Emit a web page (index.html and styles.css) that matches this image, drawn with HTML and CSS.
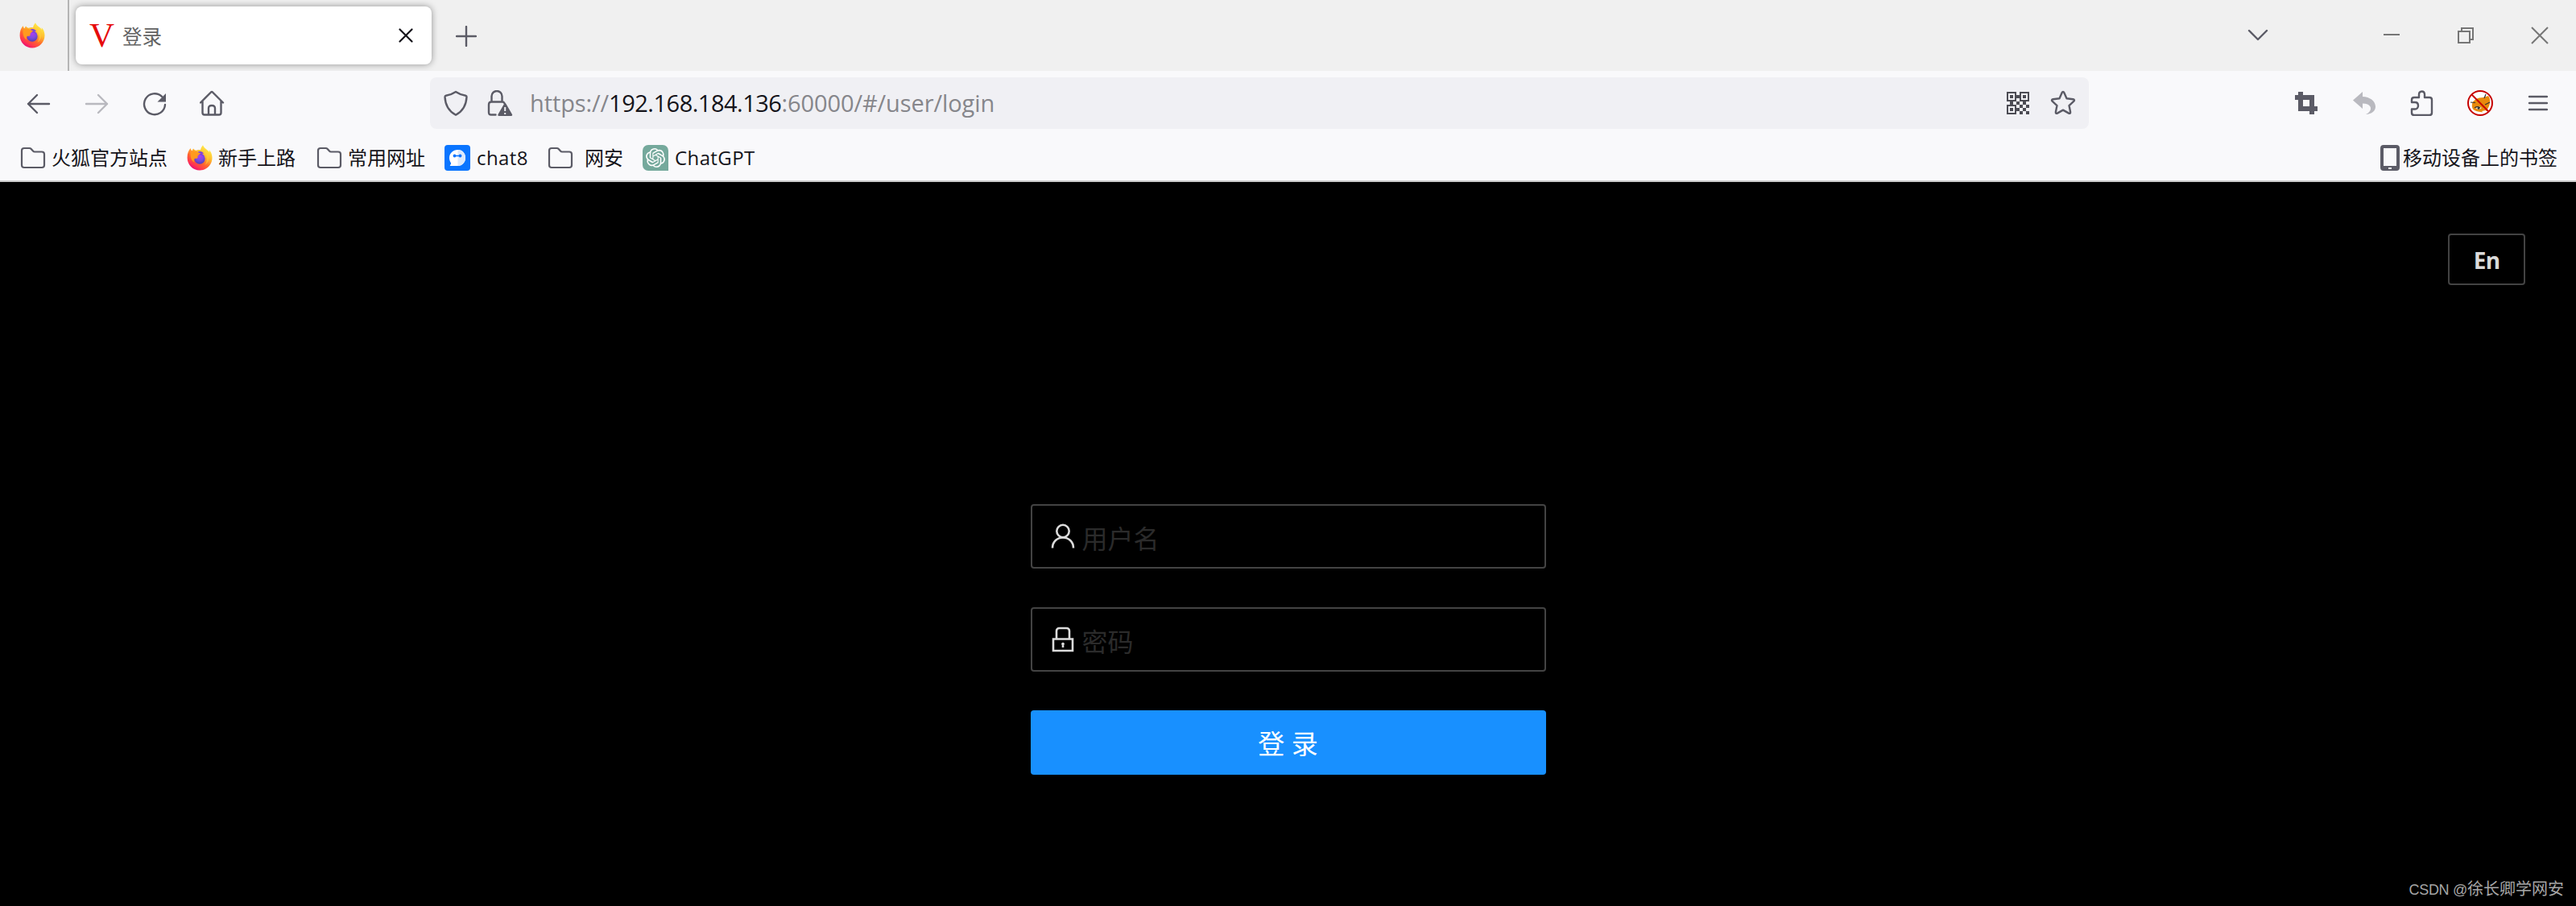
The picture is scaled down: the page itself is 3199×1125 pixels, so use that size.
FILE: index.html
```html
<!DOCTYPE html>
<html lang="zh-CN">
<head>
    <meta charset="UTF-8">
    <meta name="viewport" content="width=device-width, initial-scale=1.0">
    <title>登录</title>
    <link rel="stylesheet" href="styles.css">
</head>
<body>
    <!-- Shared icons -->
    <svg class="defs" width="0" height="0">
        <defs>
            <linearGradient id="flame" x1="0.85" y1="0.05" x2="0.25" y2="1">
                <stop offset="0" stop-color="#fff44f"/>
                <stop offset="0.35" stop-color="#ffbd2f"/>
                <stop offset="0.6" stop-color="#ff6a2c"/>
                <stop offset="0.82" stop-color="#ff3750"/>
                <stop offset="1" stop-color="#e6007f"/>
            </linearGradient>
            <radialGradient id="globe" cx="0.5" cy="0.25" r="0.8">
                <stop offset="0" stop-color="#b13bf0"/>
                <stop offset="0.5" stop-color="#7d4be0"/>
                <stop offset="1" stop-color="#4a3cb0"/>
            </radialGradient>
            <symbol id="firefox" viewBox="0 0 32 32">
                <path fill="url(#flame)" d="M20 .3c-1.600 1.800-2.700 4-2.900 6-2-.5-4-.3-5.500.5-1.500-.2-2.600-.8-3.400-2.200C7.300 5.500 6.800 6.400 6.600 7.300 5.500 6.500 4.900 5.600 4.700 4 2 7 .5 11 .6 16c0 8.700 7 15.500 15.400 15.500S31.500 24.700 31.500 16c0-4.500-2-8.500-4-9.700.4 1 .6 1.900.6 2.800C26 5.500 21.600 4.800 20 .3z"/>
                <circle cx="16" cy="17" r="6.700" fill="url(#globe)"/>
                <path fill="#ff9a1f" d="M4.800 9.200c3-1.800 6.400-1.700 8.200-.4 1.300.9 3 1 4.600 1.200-.5 1.700-3.400 2.400-4 3.600-.5 1 .6 2.200-.6 2.900-1.300.7-3-.4-3.900 1.200-.8 1.500 0 3.200 1 4.300C5.500 20 3.800 14 4.800 9.200z"/>
                <path fill="#7a3fe0" d="M13.500 8.800c2.600-1.600 6.500-.6 7.600 2.300-1.200-.5-2.200-.4-2.800 0 1.800.7 3 2.400 3.200 4-2-2.700-4-3.300-6.700-2.800.8-1 2.400-1.400 2.800-2.300-1.500 0-3-.3-4.100-1.200z"/>
                <path fill="#ffd23c" opacity=".55" d="M21 5c4 3 7 7 6.300 12.500-.5 3.600-2.500 6-5 7.500 3-4 3.400-9 1-13-1.300-2-2.700-4-2.300-7z"/>
            </symbol>
            <symbol id="folder" viewBox="0 0 32 28">
                <path fill="none" stroke="#5b5b66" stroke-width="2.200" stroke-linejoin="round" d="M5 2h6.500c1 0 1.600.3 2.200 1l2.300 2.600c.6.700 1.200.9 2 .9h9c2 0 3 1 3 3V23c0 2-1 3-3 3H5c-2 0-3-1-3-3V5c0-2 1-3 3-3z"/>
            </symbol>
        </defs>
    </svg>

    <!-- Tab strip -->
    <div class="tabs">
        <div class="pinned"><svg width="32" height="32"><use href="#firefox"/></svg></div>
        <div class="tab">
            <span class="favicon">V</span>
            <span class="tab-title">登录</span>
            <svg class="tab-close" width="18" height="18" viewBox="0 0 18 18"><path d="M1.500 1.500l15 15M16.500 1.500l-15 15"/></svg>
        </div>
        <svg class="icon new-tab" width="26" height="26" viewBox="0 0 26 26"><path d="M13 1v24M1 13h24"/></svg>
        <div class="window">
            <svg class="icon" width="26" height="16" viewBox="0 0 26 16"><path d="M2 2l11 11L24 2"/></svg>
            <svg class="sys min" width="20" height="20" viewBox="0 0 20 20"><path d="M0 9h20"/></svg>
            <svg class="sys" width="20" height="20" viewBox="0 0 20 20"><path d="M1 5h14v14H1zM5 5V1h14v14h-4"/></svg>
            <svg class="sys" width="22" height="22" viewBox="0 0 22 22"><path d="M1 1l20 20M21 1L1 21"/></svg>
        </div>
    </div>

    <!-- Navigation bar -->
    <div class="nav">
        <div class="nav-buttons">
            <svg class="icon" width="32" height="32" viewBox="0 0 32 32"><path d="M29 17H3M14 6L3 17l11 11"/></svg>
            <svg class="icon disabled" width="32" height="32" viewBox="0 0 32 32"><path d="M3 17h26M18 6l11 11-11 11"/></svg>
            <svg class="icon" width="32" height="32" viewBox="0 0 32 32"><path d="M29 18a13 13 0 1 1-4-10.200"/><path class="solid" d="M30 4v10.500H19.500z"/></svg>
            <svg class="icon" width="32" height="32" viewBox="1 0 32 32"><path d="M2 15.500L15 2.500c.7-.6 1.300-.6 2 0l13 13M4.500 13.500V28c0 1.700.8 2.500 2.500 2.500h18c1.700 0 2.500-.8 2.500-2.500V13.500M12 30V22.500c0-2 1.200-3.500 4-3.500s4 1.500 4 3.500V30"/></svg>
        </div>
        <div class="urlbar">
            <svg class="icon" width="32" height="32" viewBox="0 0 32 32"><path d="M16 2c4 2.700 8 4.200 12.200 4.700 1 .2 1.400.8 1.300 1.800C29 18.500 25 26 16 30.700 7 26 3 18.500 2.500 8.500c0-1 .4-1.600 1.300-1.800C8 6.200 12 4.700 16 2z"/></svg>
            <svg class="icon" width="32" height="32" viewBox="0 0 32 32"><path d="M5.500 14V7.500a6.500 6.500 0 0 1 13 0V14M10.500 30.500H5c-2 0-3-1-3-3V18c0-2 1-3.500 3-3.500h14c1.300 0 2 .8 2.500 1.800"/><path class="solid" d="M21 17c.7-1.300 1.800-1.300 2.500 0l7.500 13c.5 1.200 0 2-1.200 2H14.700c-1.200 0-1.800-.8-1.200-2z"/><path class="mark" d="M22.200 21v5M22.200 28v2"/></svg>
            <div class="url"><span class="scheme">https://</span><span class="host">192.168.184.136</span><span class="path">:60000/#/user/login</span></div>
            <svg class="qr" width="28" height="28" viewBox="0 0 28 28">
                <path fill-rule="evenodd" d="M0 0h12v12H0zM2 2v8h8V2zM16 0h12v12H16zM18 2v8h8V2zM0 16h12v12H0zM2 18v8h8v-8z"/>
                <path d="M4 4h4v4H4zM20 4h4v4h-4zM4 20h4v4H4zM12 4h4v4h-4zM4 12h4v4H4zM12 12h4v4h-4zM20 12h4v4h-4zM16 16h4v4h-4zM24 16h4v4h-4zM12 20h4v4h-4zM20 20h4v4h-4zM16 24h4v4h-4zM24 24h4v4h-4z"/>
            </svg>
            <svg class="icon" width="32" height="32" viewBox="0 0 32 32"><path d="M14.700 3c.6-1.300 2-1.300 2.600 0l3.200 7.300 8 .9c1.500.2 2 1.500.9 2.500l-5.900 5.400 1.600 8c.3 1.500-.8 2.200-2 1.500L16 24.600l-7.100 4c-1.200.7-2.300 0-2-1.500l1.600-8-5.900-5.400c-1.100-1-.6-2.300.9-2.500l8-.9z"/></svg>
        </div>
        <div class="extensions">
            <svg class="fill" width="28" height="28" viewBox="0 0 28 28"><path fill-rule="evenodd" d="M4 0h6v4h14v14h4v6h-4v4h-6v-4H4V10H0V4h4zM10 10v8h8v-8z"/></svg>
            <svg class="fill disabled undo" width="28" height="28" viewBox="0 0 28 28"><path d="M12 0v6c9 .5 15.500 5 16 12 .2 5-4 9.500-12 10 5.500-2.500 7-6.500 5.500-9.500C20 15.700 17 14.500 12 14.500V21L0 10.500z"/></svg>
            <svg class="icon" width="32" height="32" viewBox="-2 0 32 32"><path d="M3 14.500V12c0-2 1-3 3-3h6V5.500C12 3 13 1.500 15.500 1.500S19 3 19 5.500V9h6c2 0 3 1 3 3v16c0 2-1 3-3 3H6c-2 0-3-1-3-3v-4.500h4c2.500 0 4-1.800 4-4.300s-1.500-4.200-4-4.200H3z"/></svg>
            <svg width="32" height="32" viewBox="0 0 32 32">
                <circle cx="16" cy="16" r="15" fill="#fff"/>
                <path fill="#e88a0c" d="M6 17c1-4 5-6.500 9-7.500l5-.5 6-2c2 2 2.500 5 2 8.500-.5 4-2 6.500-3 8 0 2-1 3.500-3 4-5-.5-10-.5-14-3-2-2-2.500-4.500-2-7.500z"/>
                <path fill="#fff" d="M10 22l5-1.500 3 1.500-4 2zM18 26l5-1 2 3-4 1z"/>
                <path fill="none" stroke="#333" stroke-width="1.200" d="M4 15l6 .5M23 5l-2 5M9 22c2-1.500 5-1.500 7 0M22 18l6-3"/>
                <circle cx="14" cy="22.500" r="1.400" fill="#333"/>
                <circle cx="16" cy="16" r="15" fill="none" stroke="#c60000" stroke-width="2"/>
                <path stroke="#c60000" stroke-width="2" d="M5.500 5.500l21 21"/>
            </svg>
            <svg class="icon" width="26" height="22" viewBox="-1 0 26 22"><path d="M2 3h22M2 11h22M2 19h22"/></svg>
        </div>
    </div>

    <!-- Bookmarks -->
    <div class="bookmarks">
        <div class="bookmark b1"><svg width="32" height="28"><use href="#folder"/></svg>火狐官方站点</div>
        <div class="bookmark b2"><svg width="32" height="32"><use href="#firefox"/></svg>新手上路</div>
        <div class="bookmark b3"><svg width="32" height="28"><use href="#folder"/></svg>常用网址</div>
        <div class="bookmark b4">
            <svg width="32" height="32" viewBox="0 0 32 32"><rect width="32" height="32" rx="4" fill="#0a75ff"/><path fill="#fff" d="M16.500 6C22.500 6 26 10.500 26 16s-4 10-9.500 10H7.500c-.8 0-.9-.8-.4-1.200 1-.8 1.200-1.500.7-2.800C6.500 20 6 18 6 16 6 10.500 10.500 6 16.500 6z"/><path fill="#dce9fb" d="M16.500 6C22.500 6 26 10.500 26 16s-4 10-9.500 10z"/><path fill="none" stroke="#0a75ff" stroke-width="1.500" d="M12 13.500h8"/><circle cx="12.500" cy="13.500" r="1.900" fill="#0a75ff"/><circle cx="19.500" cy="13.500" r="1.900" fill="#0a75ff"/></svg>chat8</div>
        <div class="bookmark b5"><svg width="32" height="28"><use href="#folder"/></svg>网安</div>
        <div class="bookmark b6">
            <svg width="32" height="32" viewBox="0 0 32 32"><path fill="#75a99c" d="M7 0h18a7 7 0 0 1 7 7v25H7a7 7 0 0 1-7-7V7a7 7 0 0 1 7-7z"/>
                <g transform="translate(4 4)" fill="#fff"><path d="M22.280 9.820a5.980 5.980 0 0 0-.52-4.910 6.050 6.050 0 0 0-6.510-2.900A6.070 6.070 0 0 0 4.980 4.180a5.980 5.980 0 0 0-4 2.900 6.050 6.050 0 0 0 .74 7.100 5.980 5.980 0 0 0 .51 4.910 6.050 6.050 0 0 0 6.520 2.900A5.980 5.980 0 0 0 13.260 24a6.060 6.060 0 0 0 5.770-4.210 5.990 5.990 0 0 0 4-2.900 6.060 6.060 0 0 0-.75-7.070zm-9.020 12.610a4.480 4.480 0 0 1-2.880-1.040l.14-.08 4.780-2.760a.8.8 0 0 0 .39-.68v-6.740l2.020 1.170a.07.07 0 0 1 .04.05v5.580a4.500 4.500 0 0 1-4.490 4.500zM3.600 18.300a4.470 4.470 0 0 1-.54-3.010l.14.090 4.780 2.760a.77.77 0 0 0 .78 0l5.850-3.370v2.330a.08.08 0 0 1-.04.06L9.740 19.950a4.500 4.500 0 0 1-6.140-1.650zM2.340 7.900a4.490 4.490 0 0 1 2.370-1.970V11.600a.77.77 0 0 0 .39.68l5.810 3.350-2.020 1.170a.08.08 0 0 1-.07 0L4 14.020A4.500 4.500 0 0 1 2.340 7.900zm16.600 3.850l-5.840-3.390 2.020-1.160a.08.08 0 0 1 .07 0l4.830 2.790a4.490 4.490 0 0 1-.68 8.100v-5.680a.79.79 0 0 0-.4-.66zm2.010-3.020l-.14-.09-4.780-2.780a.78.78 0 0 0-.78 0L9.410 9.230V6.900a.07.07 0 0 1 .03-.06l4.830-2.790a4.500 4.500 0 0 1 6.680 4.660zM8.310 12.860l-2.020-1.160a.08.08 0 0 1-.04-.06V6.070a4.500 4.500 0 0 1 7.380-3.450l-.14.08-4.780 2.760a.8.8 0 0 0-.4.680zm1.100-2.370l2.600-1.500 2.600 1.500v3l-2.600 1.500-2.600-1.500z"/></g></svg>ChatGPT</div>
        <div class="bookmark mobile"><svg width="24" height="32" viewBox="0 0 24 32"><path fill="#5b5b66" fill-rule="evenodd" d="M4 0h16a4 4 0 0 1 4 4v24a4 4 0 0 1-4 4H4a4 4 0 0 1-4-4V4a4 4 0 0 1 4-4zM4 4v22h16V4zM10 28v2h4v-2z"/></svg>移动设备上的书签</div>
    </div>

    <!-- Login page -->
    <div class="page">
        <button class="lang">En</button>
        <form class="login">
            <label class="field">
                <svg width="32" height="32" viewBox="0 0 32 32"><circle cx="16" cy="9.500" r="7.700"/><path d="M3 30.500C3 22.500 9 17.500 16 17.500s13 5 13 13"/></svg>
                <input type="text" placeholder="用户名">
            </label>
            <label class="field">
                <svg width="32" height="32" viewBox="0 0 32 32"><path d="M4 15.500h24V30H4zM8 15V5.500C8 3.500 9.500 2 11.500 2h9C22.500 2 24 3.500 24 5.500V15M16 21v5"/><circle class="keyhole" cx="16" cy="21.500" r="1.800"/></svg>
                <input type="password" placeholder="密码">
            </label>
            <button class="submit" type="button">登 录</button>
        </form>
        <div class="watermark"><span class="site">CSDN @</span>徐长卿学网安</div>
    </div>
</body>
</html>
```
FILE: styles.css
```css
* {
    box-sizing: border-box;
}

body {
    margin: 0;
    height: 1125px;
    display: flex;
    flex-direction: column;
    overflow: hidden;
    background: #000;
    font-family: "Open Sans", "Noto Sans CJK SC", sans-serif;
    color: #15141a;
}

svg {
    display: block;
    flex: none;
}

.defs {
    position: absolute;
}

.icon {
    fill: none;
    stroke: #5b5b66;
    stroke-width: 2.4;
    stroke-linecap: round;
    stroke-linejoin: round;
}

.icon .solid {
    fill: #5b5b66;
    stroke: none;
}

.icon .mark {
    stroke: #f0f0f4;
    stroke-width: 2;
    stroke-linecap: butt;
}

.fill {
    fill: #5b5b66;
}

.disabled {
    opacity: 0.4;
}

/* Tab strip */
.tabs {
    height: 88px;
    flex: none;
    display: flex;
    align-items: center;
    background: #f0f0f0;
}

.pinned {
    width: 86px;
    height: 88px;
    padding: 28px 0 0 24px;
    border-right: 2px solid #b5b5b5;
}

.tab {
    display: flex;
    align-items: center;
    width: 442px;
    height: 72px;
    margin-left: 8px;
    padding: 0 23px 0 17px;
    background: #fff;
    border-radius: 8px;
    box-shadow: 0 0 8px rgba(0, 0, 0, 0.4);
}

.favicon {
    width: 32px;
    font-family: "Liberation Serif", serif;
    font-size: 43px;
    line-height: 72px;
    color: #e60c0c;
}

.tab-title {
    margin-left: 9px;
    font-family: "Noto Sans CJK SC", sans-serif;
    font-size: 24.5px;
    color: #636363;
}

.tab-close {
    margin-left: auto;
    stroke: #15141a;
    stroke-width: 2.2;
    stroke-linecap: round;
}

.new-tab {
    margin: 2px 0 0 30px;
}

.window {
    display: flex;
    align-items: center;
    margin-left: auto;
    padding-right: 34px;
}

.sys {
    fill: none;
    stroke: #767676;
    stroke-width: 2;
    margin-left: 72px;
}

.sys:last-child {
    margin-left: 71px;
}

.sys.min {
    margin-left: 143px;
}

/* Navigation bar */
.nav {
    height: 80px;
    flex: none;
    display: flex;
    align-items: center;
    background: #f9f9fb;
}

.nav-buttons {
    display: flex;
    gap: 40px;
    width: 534px;
    padding-left: 32px;
}

.urlbar {
    display: flex;
    align-items: center;
    width: 2060px;
    height: 64px;
    padding: 0 16px;
    background: #f0f0f4;
    border-radius: 8px;
}

.urlbar .icon + .icon {
    margin-left: 23px;
}

.url {
    margin-left: 21px;
    font-size: 29px;
    line-height: 64px;
    letter-spacing: -0.1px;
    white-space: nowrap;
    color: #86868b;
}

.host {
    letter-spacing: -0.5px;
    color: #15141a;
}

.qr {
    fill: #4c4c54;
    margin-left: auto;
    margin-right: 26px;
}

.extensions {
    display: flex;
    align-items: center;
    gap: 42px;
    margin-left: auto;
    padding-right: 35px;
}

.undo {
    margin: 0 -2px 0 2px;
}

/* Bookmarks */
.bookmarks {
    height: 58px;
    flex: none;
    display: flex;
    align-items: center;
    padding: 0 23px 0 25px;
    background: #f9f9fb;
    border-bottom: 2px solid #ccc;
}

.bookmark {
    display: flex;
    align-items: center;
    gap: 7px;
    font-size: 24px;
    line-height: 32px;
    white-space: nowrap;
}

.b1 {
    width: 207px;
}

.b2 {
    width: 161px;
}

.b3 {
    width: 159px;
}

.b4 {
    width: 128px;
    gap: 8px;
    letter-spacing: 0.4px;
}

.b5 {
    gap: 14px;
    width: 118px;
}

.b6 {
    gap: 8px;
    letter-spacing: 0.4px;
}

.bookmark.mobile {
    gap: 4px;
    margin-left: auto;
}

/* Login page */
.page {
    flex: 1;
    display: flex;
    flex-direction: column;
    align-items: center;
    background: #000;
}

.lang {
    align-self: flex-end;
    width: 96px;
    height: 64px;
    margin: 64px 63px 0 0;
    padding: 2px 0 0;
    background: #000;
    border: 2px solid #434343;
    border-radius: 4px;
    font: bold 28px "Open Sans", sans-serif;
    letter-spacing: -0.8px;
    color: #dbdbdb;
}

.login {
    display: flex;
    flex-direction: column;
    gap: 48px;
    width: 640px;
    margin-top: 272px;
}

.field {
    display: flex;
    align-items: center;
    height: 80px;
    padding: 0 22px;
    border: 2px solid #434343;
    border-radius: 4px;
}

.field svg {
    fill: none;
    stroke: #dbdbdb;
    stroke-width: 2.6;
}

.field .keyhole {
    fill: #dbdbdb;
    stroke: none;
}

.field input {
    flex: 1;
    min-width: 0;
    height: 76px;
    padding: 1px 0 0 8px;
    border: 0;
    outline: 0;
    background: transparent;
    font: 32px "Noto Sans CJK SC", sans-serif;
    color: #dbdbdb;
}

.field input::placeholder {
    color: #2b2b2b;
}

.submit {
    height: 80px;
    padding: 0;
    border: 0;
    border-radius: 4px;
    background: #1890ff;
    font: 33px "Noto Sans CJK SC", sans-serif;
    word-spacing: 1px;
    color: #fff;
}

.watermark {
    align-self: flex-end;
    margin: auto 15px 5px 0;
    font: 20px/30px "Liberation Sans", "Noto Sans CJK SC", sans-serif;
    color: #a6a6a6;
}

.site {
    font-size: 18px;
    letter-spacing: -0.3px;
}
```
